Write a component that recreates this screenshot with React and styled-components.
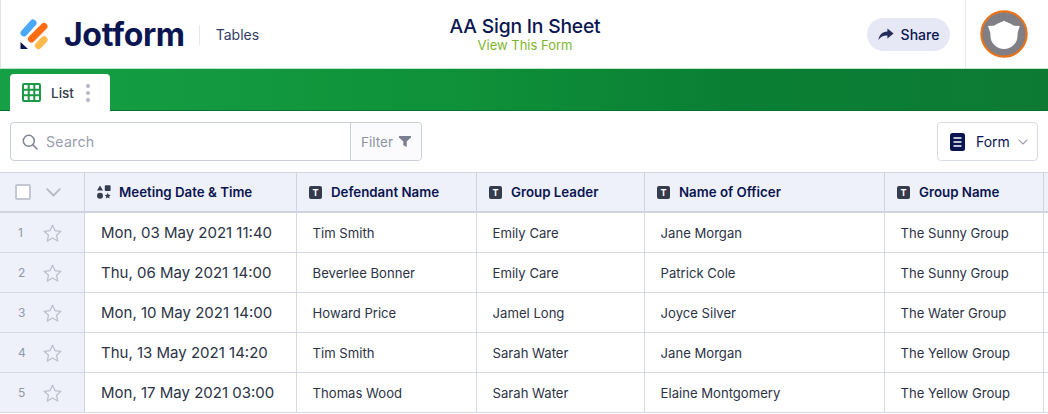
import React from "react";
import styled, { createGlobalStyle } from "styled-components";

const GlobalStyle = createGlobalStyle`
  html, body {
    margin: 0;
    padding: 0;
    background: #fff;
    overflow: hidden;
  }
  body {
    font-family: Inter, "Noto Sans", "Liberation Sans", sans-serif;
  }
`;

const Page = styled.div`
  width: 1048px;
  height: 414px;
  overflow: hidden;
  display: flex;
  flex-direction: column;
  background: #fff;
`;

const Header = styled.header`
  height: 68px;
  flex: none;
  display: flex;
  align-items: center;
  box-sizing: border-box;
  border-left: 1px solid #dfe3ea;
`;

const Brand = styled.div`
  display: flex;
  align-items: center;
  padding-left: 19px;
  padding-top: 1px;
  width: 262px;
  box-sizing: border-box;
  flex: none;
`;

const LogoName = styled.span`
  margin-left: 16px;
  font-size: 32px;
  font-weight: 700;
  letter-spacing: -0.35px;
  color: #0a1551;
  line-height: 32px;
`;

const ProductName = styled.span`
  margin-left: 14px;
  padding-left: 16px;
  border-left: 1px solid #e6e8ef;
  font-size: 14px;
  line-height: 20px;
  color: #343c6a;
`;

const FormInfo = styled.div`
  flex: 1;
  display: flex;
  flex-direction: column;
  align-items: center;
  padding-right: 80px;
  margin-top: -1px;
`;

const FormTitle = styled.div`
  font-size: 19.3px;
  font-weight: 500;
  line-height: 24px;
  color: #0a1551;
  letter-spacing: -0.2px;
`;

const FormLink = styled.div`
  font-size: 13px;
  line-height: 15px;
  color: #7fb52e;
`;

const ShareButton = styled.div`
  width: 83px;
  height: 33px;
  border-radius: 17px;
  background: #e6e8f5;
  display: flex;
  align-items: center;
  justify-content: center;
  gap: 7px;
  font-size: 14px;
  font-weight: 500;
  color: #0a1551;
  margin-right: 15px;
`;

const AvatarCell = styled.div`
  width: 83px;
  height: 68px;
  flex: none;
  box-sizing: border-box;
  border-left: 1px solid #e6e8ef;
  padding-left: 14px;
  display: flex;
  align-items: center;
`;

const Band = styled.div`
  height: 43px;
  flex: none;
  padding: 5px 0 0 10px;
  box-sizing: border-box;
  border-top: 1px solid #c4e3cd;
  border-bottom: 1px solid #0d6f2f;
  background: linear-gradient(90deg, #16a045 0%, #0f9239 42%, #0a7f34 70%, #0d7a33 100%);
`;

const Tab = styled.div`
  width: 100px;
  height: 38px;
  background: #fff;
  border-radius: 4px 4px 0 0;
  display: flex;
  align-items: center;
  padding-left: 12px;
  padding-bottom: 1px;
  box-sizing: border-box;
  font-size: 13.5px;
  font-weight: 500;
  color: #343c4e;
`;

const TabLabel = styled.span`
  margin-left: 10px;
`;

const TabDots = styled.span`
  margin-left: 12px;
  display: flex;
  flex-direction: column;
  gap: 3px;
  & i {
    width: 4px;
    height: 4px;
    border-radius: 50%;
    background: #b5b9c6;
  }
`;

const Toolbar = styled.div`
  height: 61px;
  flex: none;
  display: flex;
  align-items: center;
  justify-content: space-between;
  padding: 0 10px;
  box-sizing: border-box;
`;

const SearchBox = styled.div`
  width: 412px;
  height: 39px;
  border: 1px solid #c8ceda;
  border-radius: 4px;
  box-sizing: border-box;
  display: flex;
  align-items: stretch;
`;

const SearchField = styled.div`
  flex: 1;
  display: flex;
  align-items: center;
  gap: 8px;
  padding-left: 11px;
  font-size: 14.2px;
  color: #979dad;
  letter-spacing: 0.2px;
`;

const FilterPart = styled.div`
  width: 70px;
  border-left: 1px solid #c8ceda;
  background: #fbfbfd;
  border-radius: 0 4px 4px 0;
  display: flex;
  align-items: center;
  justify-content: center;
  gap: 6px;
  font-size: 13.5px;
  color: #8d93a5;
`;

const FormButton = styled.div`
  width: 101px;
  height: 39px;
  border: 1px solid #d8dce6;
  border-radius: 4px;
  box-sizing: border-box;
  display: flex;
  align-items: center;
  padding-left: 12px;
  font-size: 14px;
  color: #0a1551;
`;

const FormLabel = styled.span`
  margin-left: 11px;
  margin-right: 8px;
`;

const Grid = styled.div`
  display: grid;
  grid-template-columns: 85px 212px 180px 168px 240px 159px 4px;
  grid-template-rows: 41px;
  grid-auto-rows: 40px;
`;

const Cell = styled.div`
  display: flex;
  align-items: center;
  box-sizing: border-box;
  border-right: ${({ $open }) => ($open ? "none" : "1px solid #d5d9e6")};
  border-bottom: 1px solid #d5d9e6;
  padding-left: ${({ $indent }) => $indent}px;
  font-size: ${({ $big }) => ($big ? "15px" : "13.1px")};
  color: #2c3345;
  white-space: nowrap;
  overflow: hidden;
`;

const HeadCell = styled.div`
  display: flex;
  align-items: center;
  gap: ${({ $gap }) => $gap || 9}px;
  box-sizing: border-box;
  background: #eff1fa;
  border-top: 1px solid #d3d7e3;
  border-right: ${({ $open }) => ($open ? "none" : "1px solid #d0d4e1")};
  border-bottom: 2px solid #cfd3de;
  padding-left: 12px;
  font-size: 13.3px;
  font-weight: 600;
  color: #0a1551;
  white-space: nowrap;
`;

const SelectHead = styled(HeadCell)`
  padding-left: 15px;
  gap: 15px;
`;

const Checkbox = styled.span`
  width: 16px;
  height: 16px;
  box-sizing: border-box;
  background: #fff;
  border: 2px solid #c3c7d2;
  border-radius: 2px;
`;

const RowHead = styled.div`
  display: flex;
  align-items: center;
  box-sizing: border-box;
  background: #eff1fa;
  border-right: 1px solid #d0d4e1;
  border-bottom: 1px solid #d5d9e6;
  padding-left: 18px;
  gap: 16px;
  font-size: 12px;
  color: #9297a6;
`;

const RowNumber = styled.span`
  width: 9px;
`;

const TypeBadge = styled.span`
  width: 13px;
  height: 13px;
  border-radius: 2px;
  background: #343c4e;
  color: #fff;
  font-size: 9px;
  font-weight: 700;
  display: flex;
  align-items: center;
  justify-content: center;
  flex: none;
`;

const Logo = () => (
  <svg width="28" height="31" viewBox="0 0 28 31" fill="none" strokeWidth="7" strokeLinecap="round">
    <path d="M4 14 L13 4" stroke="#4aa8f5" />
    <path d="M11.4 20 L24 7.4" stroke="#ff6d12" />
    <path d="M18.4 26.6 L24 20.8" stroke="#ffb84a" />
    <path d="M0.5 23 L8 30 H0.5 Z" fill="#0a1551" stroke="none" />
  </svg>
);

const ShareIcon = () => (
  <svg width="16" height="13" viewBox="0 0 16 13">
    <path d="M9.4 0.6 L15.6 5.6 L9.4 10.6 L9.4 7.6 C5.4 7.5 2.6 8.7 0.4 12 C1.1 7.3 4 3.8 9.4 3.5 Z" fill="#252d5b" />
  </svg>
);

const Avatar = () => (
  <svg width="48" height="48" viewBox="0 0 48 48">
    <circle cx="24" cy="24" r="22.6" fill="#7f7f85" stroke="#e8731a" strokeWidth="2.2" />
    <circle cx="24" cy="25.5" r="13.6" fill="#fff" />
    <path d="M8 16 L16 15.5 L11 25 Z M39.7 16 L32 15.5 L37 25 Z M19 13.5 L24 10.8 L29 13.5 Z" fill="#fff" />
  </svg>
);

const GridIcon = () => (
  <svg width="19" height="19" viewBox="0 0 19 19" fill="none" stroke="#1c9a45" strokeWidth="2">
    <rect x="1" y="1" width="17" height="17" rx="1" />
    <path d="M1 6.7 H18 M1 12.3 H18 M6.7 1 V18 M12.3 1 V18" />
  </svg>
);

const SearchIcon = () => (
  <svg width="16" height="16" viewBox="0 0 16 16" fill="none" stroke="#7e8494" strokeWidth="1.5" strokeLinecap="round">
    <circle cx="6.8" cy="6.8" r="5.5" />
    <path d="M10.9 10.9 L15 15" />
  </svg>
);

const FunnelIcon = () => (
  <svg width="12" height="11" viewBox="0 0 12 11">
    <path d="M0 0 H12 V1.6 L7.7 5.6 V11 L4.3 9.2 V5.6 L0 1.6 Z" fill="#7b8090" />
  </svg>
);

const FormIcon = () => (
  <svg width="15" height="18" viewBox="0 0 15 18">
    <rect width="15" height="18" rx="2.5" fill="#0a1551" />
    <path d="M3.5 5 H11.5 M3.5 9 H11.5 M3.5 13 H11.5" stroke="#fff" strokeWidth="1.7" />
  </svg>
);

const Chevron = ({ size, color, weight }) => (
  <svg width={size} height={size * 0.6} viewBox="0 0 10 6" fill="none" stroke={color} strokeWidth={weight} strokeLinecap="round" strokeLinejoin="round">
    <path d="M0.8 0.8 L5 5 L9.2 0.8" />
  </svg>
);

const MixedIcon = () => (
  <svg width="14" height="14" viewBox="0 0 14 14" fill="#343c4e">
    <path d="M3 0.5 L6 5.6 H0 Z" />
    <rect x="7.8" y="0.2" width="5.8" height="5.8" rx="0.8" />
    <circle cx="3" cy="10.8" r="3" />
    <path d="M10.7 7.8 L11.6 9.8 L13.8 10 L12.1 11.4 L12.7 13.6 L10.7 12.4 L8.7 13.6 L9.3 11.4 L7.6 10 L9.8 9.8 Z" />
  </svg>
);

const StarIcon = () => (
  <svg width="19" height="18" viewBox="0 0 19 18" fill="none" stroke="#b9bdca" strokeWidth="1.2" strokeLinejoin="round">
    <path d="M9.5 1.2 L12 6.6 L17.9 7.3 L13.5 11.2 L14.7 17 L9.5 14.1 L4.3 17 L5.5 11.2 L1.1 7.3 L7 6.6 Z" />
  </svg>
);

const columns = ["Defendant Name", "Group Leader", "Name of Officer", "Group Name"];

const rows = [
  ["Mon, 03 May 2021 11:40", "Tim Smith", "Emily Care", "Jane Morgan", "The Sunny Group"],
  ["Thu, 06 May 2021 14:00", "Beverlee Bonner", "Emily Care", "Patrick Cole", "The Sunny Group"],
  ["Mon, 10 May 2021 14:00", "Howard Price", "Jamel Long", "Joyce Silver", "The Water Group"],
  ["Thu, 13 May 2021 14:20", "Tim Smith", "Sarah Water", "Jane Morgan", "The Yellow Group"],
  ["Mon, 17 May 2021 03:00", "Thomas Wood", "Sarah Water", "Elaine Montgomery", "The Yellow Group"],
];

const App = () => (
  <Page>
    <GlobalStyle />
    <Header>
      <Brand>
        <Logo />
        <LogoName>Jotform</LogoName>
        <ProductName>Tables</ProductName>
      </Brand>
      <FormInfo>
        <FormTitle>AA Sign In Sheet</FormTitle>
        <FormLink>View This Form</FormLink>
      </FormInfo>
      <ShareButton>
        <ShareIcon />
        Share
      </ShareButton>
      <AvatarCell>
        <Avatar />
      </AvatarCell>
    </Header>
    <Band>
      <Tab>
        <GridIcon />
        <TabLabel>List</TabLabel>
        <TabDots>
          <i />
          <i />
          <i />
        </TabDots>
      </Tab>
    </Band>
    <Toolbar>
      <SearchBox>
        <SearchField>
          <SearchIcon />
          Search
        </SearchField>
        <FilterPart>
          Filter
          <FunnelIcon />
        </FilterPart>
      </SearchBox>
      <FormButton>
        <FormIcon />
        <FormLabel>Form</FormLabel>
        <Chevron size={10} color="#9aa0b0" weight={1.1} />
      </FormButton>
    </Toolbar>
    <Grid>
      <SelectHead>
        <Checkbox />
        <Chevron size={15} color="#b5b9c6" weight={1.2} />
      </SelectHead>
      <HeadCell $gap={8}>
        <MixedIcon />
        Meeting Date &amp; Time
      </HeadCell>
      {columns.map((name) => (
        <HeadCell key={name}>
          <TypeBadge>T</TypeBadge>
          {name}
        </HeadCell>
      ))}
      <HeadCell $open />
      {rows.map((row, i) => (
        <React.Fragment key={row[0]}>
          <RowHead>
            <RowNumber>{i + 1}</RowNumber>
            <StarIcon />
          </RowHead>
          <Cell $big $indent={16}>{row[0]}</Cell>
          {row.slice(1).map((value, c) => (
            <Cell key={c} $indent={15.6}>{value}</Cell>
          ))}
          <Cell $open />
        </React.Fragment>
      ))}
    </Grid>
  </Page>
);

export default App;
